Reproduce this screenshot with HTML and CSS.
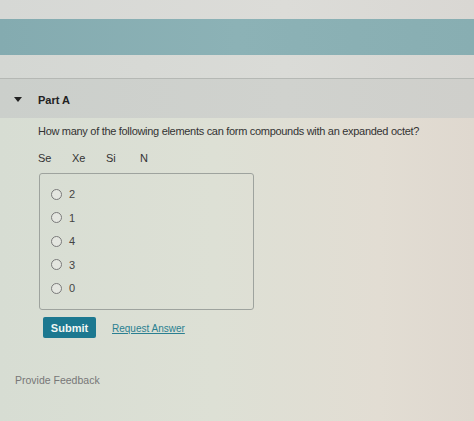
FILE: index.html
```html
<!DOCTYPE html>
<html>
<head>
<meta charset="utf-8">
<link rel="stylesheet" href="styles.css">
</head>
<body>
<div class="band-top"></div>
<div class="band-teal"></div>
<div class="band-gap"></div>
<div class="part-header">
  <span class="caret"></span>
  <span class="part-title">Part A</span>
</div>
<div class="content">
  <p class="question">How many of the following elements can form compounds with an expanded octet?</p>
  <div class="elements"><span>Se</span><span>Xe</span><span>Si</span><span>N</span></div>
  <div class="answers">
    <label class="option"><span class="radio"></span><span>2</span></label>
    <label class="option"><span class="radio"></span><span>1</span></label>
    <label class="option"><span class="radio"></span><span>4</span></label>
    <label class="option"><span class="radio"></span><span>3</span></label>
    <label class="option"><span class="radio"></span><span>0</span></label>
  </div>
  <div class="actions">
    <button class="submit">Submit</button>
    <a class="request" href="#">Request Answer</a>
  </div>
</div>
<div class="feedback">Provide Feedback</div>
</body>
</html>
```
FILE: styles.css
```css
html, body {
  margin: 0;
  padding: 0;
}
body {
  width: 474px;
  height: 421px;
  overflow: hidden;
  font-family: "Liberation Sans", Arial, sans-serif;
  color: #333;
  background: linear-gradient(90deg, #d7ddd3 0%, #dde0d5 45%, #e2ddd3 80%, #dfd8cf 100%);
}
.band-top {
  height: 19px;
  background: linear-gradient(90deg, #d6d8d5, #dcdcd8 60%, #d9d7d3);
}
.band-teal {
  height: 36px;
  background: linear-gradient(90deg, #84abb0, #8cb2b6 50%, #88aeb2);
}
.band-gap {
  height: 23px;
  background: linear-gradient(90deg, #d4d7d3, #dadbd7 60%, #d7d6d2);
  border-bottom: 1px solid #b5b8b4;
}
.part-header {
  height: 39px;
  display: flex;
  align-items: center;
  padding-left: 14px;
  background: linear-gradient(90deg, #cbcfcb, #d0d2ce 60%, #cfcfcb);
}
.caret {
  width: 0;
  height: 0;
  border-left: 4px solid transparent;
  border-right: 4px solid transparent;
  border-top: 5px solid #222;
  margin-top: 1px;
}
.part-title {
  margin-left: 16px;
  font-size: 11px;
  font-weight: bold;
  color: #222;
  margin-top: 2px;
}
.content {
  padding-left: 38px;
}
.question {
  margin: 6px 0 0;
  font-size: 11px;
  line-height: 14px;
  letter-spacing: -0.3px;
  color: #333;
}
.elements {
  display: flex;
  margin-top: 13px;
  font-size: 11px;
  line-height: 14px;
  color: #333;
}
.elements span {
  width: 34px;
}
.answers {
  margin-top: 8px;
  margin-left: 1px;
  width: 215px;
  height: 137px;
  border: 1px solid #9ea39e;
  border-radius: 3px;
  display: flex;
  flex-direction: column;
  gap: 9.5px;
  padding-top: 13px;
  box-sizing: border-box;
  padding-left: 11px;
}
.option {
  display: flex;
  align-items: center;
  gap: 7px;
  font-size: 11px;
  line-height: 14px;
  color: #444;
}
.radio {
  width: 9px;
  height: 9px;
  border: 1px solid #7a7a7a;
  border-radius: 50%;
  background: #e4e6e0;
}
.actions {
  display: flex;
  align-items: center;
  margin-top: 7px;
  margin-left: 5px;
  gap: 16px;
}
.submit {
  width: 53px;
  height: 21px;
  border: none;
  border-radius: 2px;
  background: #1c7890;
  color: #f2f6f4;
  font-family: "Liberation Sans", Arial, sans-serif;
  font-size: 11px;
  font-weight: bold;
  padding: 0;
}
.request {
  font-size: 10px;
  color: #2a7f91;
  text-decoration: underline;
  margin-top: 2px;
}
.feedback {
  margin-top: 36px;
  padding-left: 15px;
  font-size: 10.5px;
  color: #777;
}
```
